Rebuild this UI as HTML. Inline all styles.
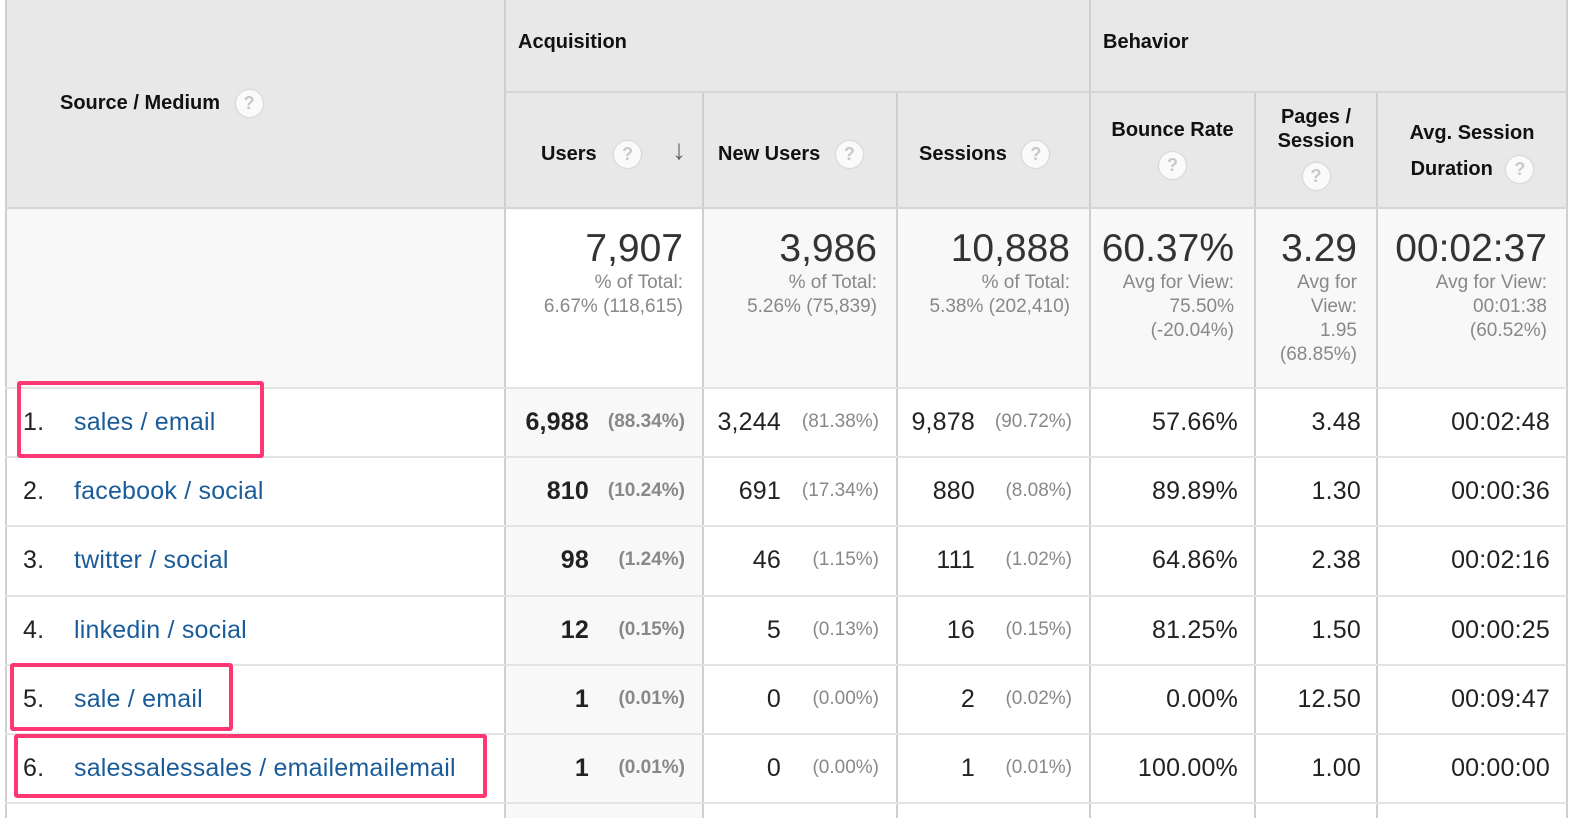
<!DOCTYPE html>
<html><head><style>
*{margin:0;padding:0;box-sizing:border-box}
body{width:1586px;height:818px;background:#fff;font-family:"Liberation Sans",Arial,sans-serif;position:relative;overflow:hidden;color:#222}
.a{position:absolute;white-space:nowrap}
.hd{background:#e8e8e8}
.vl{position:absolute;width:2px;background:#cfcfcf}
.hl{position:absolute;height:2px;background:#d6d6d6}
.h{font-weight:bold;font-size:20px;color:#111}
.q{display:inline-block;width:27px;height:27px;border-radius:50%;background:#fafafa;box-shadow:0 0 2px #bbb;color:#c8c8c8;font-size:18px;font-weight:bold;text-align:center;line-height:27px;vertical-align:middle}
.big{font-size:39px;color:#333;text-align:right;line-height:44px}
.sub{font-size:19px;color:#888;text-align:right;line-height:24px}
.r{font-size:25px;color:#222;letter-spacing:0.2px}
.lk{color:#1a5c9a}
.pc{color:#888;font-size:19px}
.pink{position:absolute;border:4px solid #ff3773;border-radius:3px}
</style></head><body>
<div class="a hd" style="left:7px;top:0;width:1560px;height:208px"></div>
<div class="a" style="left:7px;top:208px;width:1560px;height:180px;background:#f8f8f8"></div>
<div class="a" style="left:505px;top:210px;width:198px;height:178px;background:#fff"></div>
<div class="a" style="left:505px;top:388px;width:198px;height:430px;background:#f8f8f8"></div>
<div class="vl" style="left:5px;top:0;height:818px"></div>
<div class="vl" style="left:504px;top:0;height:818px"></div>
<div class="vl" style="left:702px;top:92px;height:726px"></div>
<div class="vl" style="left:896px;top:92px;height:726px"></div>
<div class="vl" style="left:1089px;top:0;height:818px"></div>
<div class="vl" style="left:1254px;top:92px;height:726px"></div>
<div class="vl" style="left:1376px;top:92px;height:726px"></div>
<div class="vl" style="left:1566px;top:0;height:818px"></div>
<div class="hl" style="left:505px;top:91px;width:1062px"></div>
<div class="hl" style="left:5px;top:207px;width:1562px"></div>
<div class="hl" style="left:5px;top:387px;width:1562px;background:#e4e4e4"></div>
<div class="hl" style="left:5px;top:456px;width:1562px;background:#e4e4e4"></div>
<div class="hl" style="left:5px;top:525px;width:1562px;background:#e4e4e4"></div>
<div class="hl" style="left:5px;top:595px;width:1562px;background:#e4e4e4"></div>
<div class="hl" style="left:5px;top:664px;width:1562px;background:#e4e4e4"></div>
<div class="hl" style="left:5px;top:733px;width:1562px;background:#e4e4e4"></div>
<div class="hl" style="left:5px;top:802px;width:1562px;background:#e4e4e4"></div>
<div class="a h" style="left:60px;top:90px">Source / Medium <span class="q" style="margin-left:10px">?</span></div>
<div class="a h" style="left:518px;top:31px">Acquisition</div>
<div class="a h" style="left:1103px;top:31px">Behavior</div>
<div class="a h" style="left:541px;top:141px">Users <span class="q" style="margin-left:12px">?</span></div>
<div class="a" style="left:672px;top:134px;font-size:28px;color:#666;font-weight:bold">&#8595;</div>
<div class="a h" style="left:718px;top:141px">New Users <span class="q" style="margin-left:10px">?</span></div>
<div class="a h" style="left:919px;top:141px">Sessions <span class="q" style="margin-left:10px">?</span></div>
<div class="a h" style="left:1090px;top:119px;width:165px;text-align:center">Bounce Rate<br><span class="q" style="margin-top:10px">?</span></div>
<div class="a h" style="left:1255px;top:105px;width:122px;text-align:center;line-height:24px">Pages /<br>Session<br><span class="q" style="margin-top:10px">?</span></div>
<div class="a h" style="left:1377px;top:115px;width:190px;text-align:center;line-height:36px">Avg. Session<br>Duration <span class="q" style="margin-left:8px">?</span></div>
<div class="a" style="left:505px;top:227px;width:178px"><div class="big">7,907</div><div class="sub">% of Total:<br>6.67% (118,615)</div></div>
<div class="a" style="left:703px;top:227px;width:174px"><div class="big">3,986</div><div class="sub">% of Total:<br>5.26% (75,839)</div></div>
<div class="a" style="left:897px;top:227px;width:173px"><div class="big">10,888</div><div class="sub">% of Total:<br>5.38% (202,410)</div></div>
<div class="a" style="left:1090px;top:227px;width:144px"><div class="big">60.37%</div><div class="sub">Avg for View:<br>75.50%<br>(-20.04%)</div></div>
<div class="a" style="left:1255px;top:227px;width:102px"><div class="big">3.29</div><div class="sub">Avg for<br>View:<br>1.95<br>(68.85%)</div></div>
<div class="a" style="left:1377px;top:227px;width:170px"><div class="big">00:02:37</div><div class="sub">Avg for View:<br>00:01:38<br>(60.52%)</div></div>
<div id="rows"></div>
<script>
var d=[["sales / email","6,988","(88.34%)","3,244","(81.38%)","9,878","(90.72%)","57.66%","3.48","00:02:48"],
["facebook / social","810","(10.24%)","691","(17.34%)","880","(8.08%)","89.89%","1.30","00:00:36"],
["twitter / social","98","(1.24%)","46","(1.15%)","111","(1.02%)","64.86%","2.38","00:02:16"],
["linkedin / social","12","(0.15%)","5","(0.13%)","16","(0.15%)","81.25%","1.50","00:00:25"],
["sale / email","1","(0.01%)","0","(0.00%)","2","(0.02%)","0.00%","12.50","00:09:47"],
["salessalessales / emailemailemail","1","(0.01%)","0","(0.00%)","1","(0.01%)","100.00%","1.00","00:00:00"]];
var tops=[388,457,526,596,665,734],h='';
d.forEach(function(r,i){var t=tops[i]+20;
h+='<div class="a r" style="left:23px;top:'+t+'px">'+(i+1)+'.</div>';
h+='<div class="a r lk" style="left:74px;top:'+t+'px">'+r[0]+'</div>';
h+='<div class="a r" style="left:505px;top:'+t+'px;width:84px;text-align:right;font-weight:bold">'+r[1]+'</div>';
h+='<div class="a pc" style="left:505px;top:'+(t+3)+'px;width:180px;text-align:right;font-weight:bold">'+r[2]+'</div>';
h+='<div class="a r" style="left:703px;top:'+t+'px;width:78px;text-align:right">'+r[3]+'</div>';
h+='<div class="a pc" style="left:703px;top:'+(t+3)+'px;width:176px;text-align:right">'+r[4]+'</div>';
h+='<div class="a r" style="left:897px;top:'+t+'px;width:78px;text-align:right">'+r[5]+'</div>';
h+='<div class="a pc" style="left:897px;top:'+(t+3)+'px;width:175px;text-align:right">'+r[6]+'</div>';
h+='<div class="a r" style="left:1090px;top:'+t+'px;width:148px;text-align:right">'+r[7]+'</div>';
h+='<div class="a r" style="left:1255px;top:'+t+'px;width:106px;text-align:right">'+r[8]+'</div>';
h+='<div class="a r" style="left:1377px;top:'+t+'px;width:173px;text-align:right">'+r[9]+'</div>';});
document.getElementById('rows').innerHTML=h;
</script>
<div class="pink" style="left:17px;top:381px;width:247px;height:77px"></div>
<div class="pink" style="left:10px;top:663px;width:223px;height:68px"></div>
<div class="pink" style="left:14px;top:734px;width:473px;height:64px"></div>
</body></html>
